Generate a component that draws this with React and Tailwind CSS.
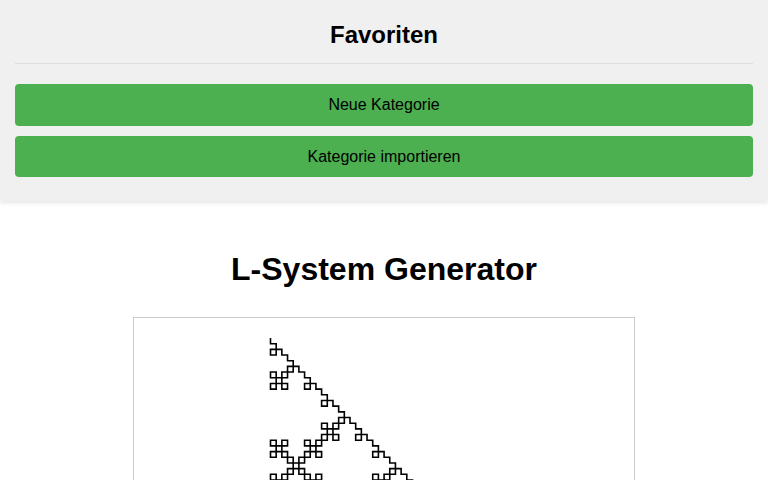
import React from "react";

// Quadratic Koch curve from the L-system F -> F+F-F-F+F
function kochPoints(iterations, step, startX, startY) {
  let axiom = "F";
  for (let i = 0; i < iterations; i++) {
    axiom = axiom.replace(/F/g, "F+F-F-F+F");
  }
  let x = startX;
  let y = startY;
  let dx = 0;
  let dy = step;
  const points = [[x, y]];
  for (const c of axiom) {
    if (c === "+") {
      [dx, dy] = [dy, -dx];
    } else if (c === "-") {
      [dx, dy] = [-dy, dx];
    } else {
      x += dx;
      y += dy;
      points.push([x, y]);
    }
  }
  return points.map((p) => p.join(",")).join(" ");
}

const Curve = () => (
  <svg width="500" height="500" viewBox="0 0 500 500" className="block">
    <polyline points={kochPoints(4, 460 / 81, 136.5, 20)} fill="none" stroke="#000" strokeWidth="1.6" />
  </svg>
);

const App = () => {
  return (
    <div className="bg-white font-['Liberation_Sans',Arial,sans-serif] text-black">
      <div className="h-[201px] bg-[#f0f0f0] px-[15px] pt-[21px] shadow-[0_2px_4px_rgba(0,0,0,0.1)]">
        <h2 className="border-b border-[#ddd] pb-[15px] text-center text-2xl leading-[27px] font-bold mb-5">Favoriten</h2>
        <div className="flex flex-col gap-2.5">
          <button className="h-[41.6px] w-full rounded bg-[#4caf50] text-base">Neue Kategorie</button>
          <button className="h-[41.6px] w-full rounded bg-[#4caf50] pt-[2px] text-base">Kategorie importieren</button>
        </div>
      </div>
      <div className="flex flex-col items-center pt-[50px]">
        <h1 className="text-[32px] leading-[37px] font-bold mb-[29px]">L-System Generator</h1>
        <div className="border border-[#ccc]">
          <Curve />
        </div>
      </div>
    </div>
  );
};

export default App;
